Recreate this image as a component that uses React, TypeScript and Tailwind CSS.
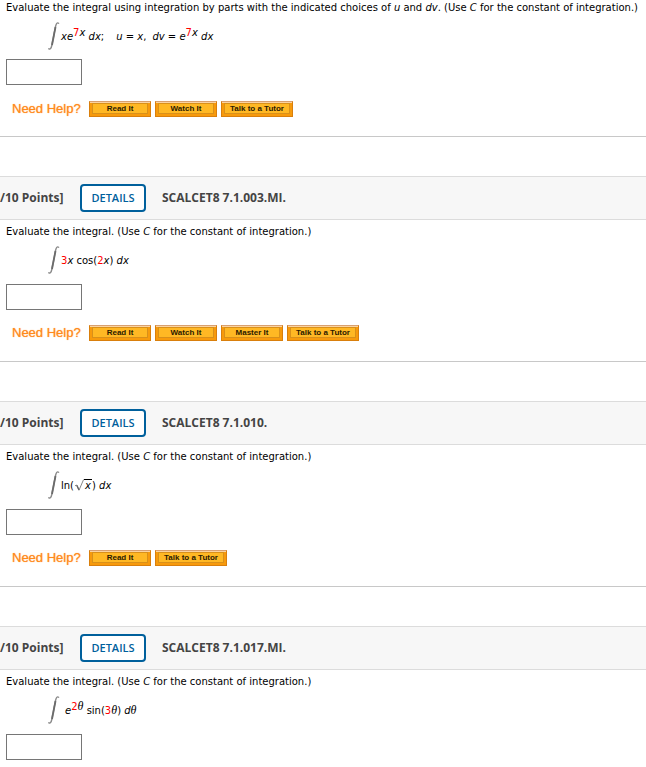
import React from "react";

interface Question {
  code?: string;
  prompt: React.ReactNode;
  formula: React.ReactNode;
  help: string[];
}

function Red({ children }: { children: React.ReactNode }) {
  return <span className="text-[#ff0000]">{children}</span>;
}

function Sup({ children }: { children: React.ReactNode }) {
  return <sup className="relative -top-1 align-baseline text-[10px] leading-none">{children}</sup>;
}

function Theta() {
  return <i className="font-['Liberation_Serif',serif] text-xs leading-none">θ</i>;
}

function IntegralSign() {
  return (
    <svg className="h-7 w-3 shrink-0" viewBox="0 0 12 28" fill="none" role="img" aria-label="integral">
      <path
        d="M10.6 1.2C9.2 0.2 8.2 1.6 7.6 4.4L3.9 23C3.2 26.2 2.4 27.6 0.8 26.8"
        stroke="#8a8a8a"
        strokeWidth="1.4"
        strokeLinecap="round"
      />
      <path d="M7.5 5L4 23" stroke="#6b6b6b" strokeWidth="1.8" />
    </svg>
  );
}

function SquareRoot({ children }: { children: React.ReactNode }) {
  return (
    <span className="inline-flex items-baseline">
      <svg className="h-3 w-2.5 self-end" viewBox="0 0 10 12" fill="none" aria-hidden="true">
        <path d="M1 6.8L2.6 6L5 11.2L9.6 0.5" stroke="#888888" strokeWidth="1" />
        <path d="M2.8 6.2L5 11" stroke="#666666" strokeWidth="1.4" />
      </svg>
      <span className="border-t border-black px-px leading-[11px]">{children}</span>
    </span>
  );
}

function HelpButton({ label }: { label: string }) {
  const width = label === "Talk to a Tutor" ? "w-[72px]" : "w-[62px]";
  return (
    <button
      type="button"
      className={`${width} h-4 border border-[#d97f0c] border-t-[#d8a070] bg-[#f79a0c] px-0.5 pt-px pb-0.5 shadow-[inset_0_1px_0_#fbd3a0]`}
    >
      <span className="flex h-full items-center justify-center border border-[#d9901a] bg-[#ffb824] font-['Liberation_Sans',sans-serif] text-[8px] leading-none font-bold whitespace-nowrap text-[#2b1a00]">
        {label}
      </span>
    </button>
  );
}

function QuestionHeader({ code }: { code: string }) {
  return (
    <header className="mt-[39px] flex h-11 items-center border-y border-[#dcdcdc] bg-[#f7f7f7] font-['Open_Sans',sans-serif] text-xs font-bold text-[#444444]">
      <span className="w-20 shrink-0">/10 Points]</span>
      <button
        type="button"
        className="h-7 w-[66px] shrink-0 rounded border-2 border-[#00609c] bg-white text-[11px] font-semibold text-[#00609c]"
      >
        DETAILS
      </button>
      <h2 className="ml-4">{code}</h2>
    </header>
  );
}

const SHORT_PROMPT = (
  <>
    Evaluate the integral. (Use <i>C</i> for the constant of integration.)
  </>
);

const QUESTIONS: Question[] = [
  {
    prompt: (
      <>
        Evaluate the integral using integration by parts with the indicated choices of <i>u</i> and <i>dv</i>. (Use{" "}
        <i>C</i> for the constant of integration.)
      </>
    ),
    formula: (
      <>
        <i>xe</i>
        <Sup>
          <Red>7</Red>
          <i>x</i>
        </Sup>{" "}
        <i>dx</i>;
        <span className="ml-3">
          <i>u</i> = <i>x</i>,
        </span>
        <span className="ml-1.5">
          <i>dv</i> = <i>e</i>
          <Sup>
            <Red>7</Red>
            <i>x</i>
          </Sup>{" "}
          <i>dx</i>
        </span>
      </>
    ),
    help: ["Read It", "Watch It", "Talk to a Tutor"],
  },
  {
    code: "SCALCET8 7.1.003.MI.",
    prompt: SHORT_PROMPT,
    formula: (
      <>
        <Red>3</Red>
        <i>x</i> cos(<Red>2</Red>
        <i>x</i>) <i>dx</i>
      </>
    ),
    help: ["Read It", "Watch It", "Master It", "Talk to a Tutor"],
  },
  {
    code: "SCALCET8 7.1.010.",
    prompt: SHORT_PROMPT,
    formula: (
      <>
        ln(
        <SquareRoot>
          <i>x</i>
        </SquareRoot>
        ) <i>dx</i>
      </>
    ),
    help: ["Read It", "Talk to a Tutor"],
  },
  {
    code: "SCALCET8 7.1.017.MI.",
    prompt: SHORT_PROMPT,
    formula: (
      <span className="ml-1">
        <i>e</i>
        <Sup>
          <Red>2</Red>
          <Theta />
        </Sup>{" "}
        sin(
        <Red>3</Red>
        <Theta />) <i>d</i>
        <Theta />
      </span>
    ),
    help: [],
  },
];

function QuestionBlock({ question, index }: { question: Question; index: number }) {
  const { code, prompt, formula, help } = question;
  const answerId = `answer-${index}`;
  return (
    <section>
      {code && <QuestionHeader code={code} />}
      <div className={`px-1.5 ${code ? "pt-[5px]" : "pt-px"}`}>
        <label htmlFor={answerId} className="block text-[10px] leading-[14px] whitespace-nowrap">
          {prompt}
        </label>
        <div className="flex h-10 items-center gap-px pt-0.5 pl-[42px] text-[10px]">
          <IntegralSign />
          <span className="whitespace-nowrap">{formula}</span>
        </div>
        <input
          id={answerId}
          type="text"
          className={`block h-[26px] w-[76px] border border-[#767676] bg-white px-1 text-[10px] outline-none ${code ? "mt-[5px]" : "mt-1"}`}
        />
      </div>
      {help.length > 0 && (
        <>
          <div className={`flex h-4 items-center gap-1 pl-3 ${code ? "mt-[15px]" : "mt-4"}`}>
            <span className="w-[73px] font-['Liberation_Sans',sans-serif] text-[13px] leading-4 whitespace-nowrap text-[#ff8a1c] [text-shadow:0_0_1px_#ff9d40]">
              Need Help?
            </span>
            {help.map((label) => (
              <HelpButton key={label} label={label} />
            ))}
          </div>
          <hr className={`border-[#c8c8c8] ${code ? "mt-5" : "mt-[19px]"}`} />
        </>
      )}
    </section>
  );
}

export default function App() {
  return (
    <main className="min-h-screen w-full overflow-x-hidden bg-white font-['DejaVu_Sans',sans-serif] text-black">
      {QUESTIONS.map((question, index) => (
        <QuestionBlock key={index} question={question} index={index} />
      ))}
    </main>
  );
}
